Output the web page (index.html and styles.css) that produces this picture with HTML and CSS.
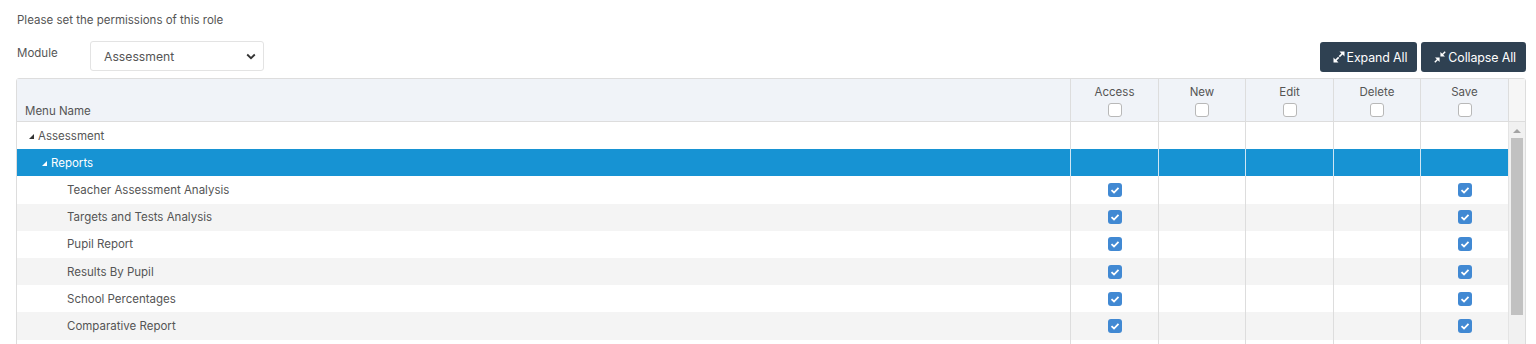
FILE: index.html
```html
<!DOCTYPE html>
<html>
<head>
<meta charset="utf-8">
<link rel="stylesheet" href="styles.css">
</head>
<body>
<div class="page">
  <p class="intro">Please set the permissions of this role</p>
  <div class="toolbar">
    <div class="module">
      <label class="module-label">Module</label>
      <div class="select">
        <span>Assessment</span>
        <svg class="chev" width="10" height="7" viewBox="0 0 10 7"><path d="M1.2 1.5 L5 5.2 L8.8 1.5" fill="none" stroke="#333" stroke-width="1.8"/></svg>
      </div>
    </div>
    <div class="actions">
      <button class="btn"><svg width="12" height="12" viewBox="0 0 12 12"><path d="M6.5 0.5 H11.5 V5.5 L9.6 3.6 L6.9 6.3 L5.7 5.1 L8.4 2.4 Z M5.5 11.5 H0.5 V6.5 L2.4 8.4 L5.1 5.7 L6.3 6.9 L3.6 9.6 Z" fill="#fff"/></svg>Expand All</button>
      <button class="btn"><svg width="12" height="12" viewBox="0 0 12 12"><path d="M10.7 0.3 L11.7 1.3 L9.2 3.8 L11 5.6 H6.4 V1 L8.2 2.8 Z M1.3 11.7 L0.3 10.7 L2.8 8.2 L1 6.4 H5.6 V11 L3.8 9.2 Z" fill="#fff"/></svg>Collapse All</button>
    </div>
  </div>

  <div class="grid">
    <div class="head">
      <div class="hcell name">Menu Name</div>
      <div class="hcell"><span>Access</span><i class="cb"></i></div>
      <div class="hcell"><span>New</span><i class="cb"></i></div>
      <div class="hcell"><span>Edit</span><i class="cb"></i></div>
      <div class="hcell"><span>Delete</span><i class="cb"></i></div>
      <div class="hcell"><span>Save</span><i class="cb"></i></div>
      <div class="hcell sb"></div>
    </div>
    <div class="body">
      <div class="rows">
        <div class="row">
          <div class="cell name lvl0"><span class="tri dark"></span>Assessment</div>
          <div class="cell"></div><div class="cell"></div><div class="cell"></div><div class="cell"></div><div class="cell"></div>
        </div>
        <div class="row sel">
          <div class="cell name lvl1"><span class="tri light"></span>Reports</div>
          <div class="cell"></div><div class="cell"></div><div class="cell"></div><div class="cell"></div><div class="cell"></div>
        </div>
        <div class="row">
          <div class="cell name lvl2">Teacher Assessment Analysis</div>
          <div class="cell"><i class="cb on"></i></div><div class="cell"></div><div class="cell"></div><div class="cell"></div><div class="cell"><i class="cb on"></i></div>
        </div>
        <div class="row alt">
          <div class="cell name lvl2">Targets and Tests Analysis</div>
          <div class="cell"><i class="cb on"></i></div><div class="cell"></div><div class="cell"></div><div class="cell"></div><div class="cell"><i class="cb on"></i></div>
        </div>
        <div class="row">
          <div class="cell name lvl2">Pupil Report</div>
          <div class="cell"><i class="cb on"></i></div><div class="cell"></div><div class="cell"></div><div class="cell"></div><div class="cell"><i class="cb on"></i></div>
        </div>
        <div class="row alt">
          <div class="cell name lvl2">Results By Pupil</div>
          <div class="cell"><i class="cb on"></i></div><div class="cell"></div><div class="cell"></div><div class="cell"></div><div class="cell"><i class="cb on"></i></div>
        </div>
        <div class="row">
          <div class="cell name lvl2">School Percentages</div>
          <div class="cell"><i class="cb on"></i></div><div class="cell"></div><div class="cell"></div><div class="cell"></div><div class="cell"><i class="cb on"></i></div>
        </div>
        <div class="row alt">
          <div class="cell name lvl2">Comparative Report</div>
          <div class="cell"><i class="cb on"></i></div><div class="cell"></div><div class="cell"></div><div class="cell"></div><div class="cell"><i class="cb on"></i></div>
        </div>
        <div class="row">
          <div class="cell name lvl2"></div>
          <div class="cell"></div><div class="cell"></div><div class="cell"></div><div class="cell"></div><div class="cell"></div>
        </div>
      </div>
      <div class="scrollbar">
        <div class="arrow"></div>
        <div class="thumb"></div>
      </div>
    </div>
  </div>
</div>
</body>
</html>
```

FILE: styles.css
```css
* { box-sizing: border-box; }
html, body { margin: 0; padding: 0; background: #fff; overflow: hidden; }
body { font-family: Inter, "Noto Sans", sans-serif; font-size: 11.5px; color: #555; }
.page { padding: 0 10px 0 16px; height: 344px; overflow: hidden; }
.intro { margin: 0; padding-top: 13px; line-height: 14px; font-size: 11.5px; color: #555; padding-left: 1px; }
.toolbar { display: flex; justify-content: space-between; align-items: flex-end; margin-top: 14px; }
.module { display: flex; align-items: flex-start; }
.module-label { width: 74px; padding-left: 1px; padding-top: 5px; font-size: 11.5px; color: #555; }
.select { width: 174px; height: 30px; border: 1px solid #e3e3e3; border-radius: 3px; display: flex; align-items: center; justify-content: space-between; padding: 0 7px 0 13px; font-size: 12.2px; color: #555; }
.chev { margin-top: 1px; }
.actions { display: flex; gap: 4px; margin-bottom: -1px; }
.btn { height: 30px; background: #2f4152; color: #fff; border: 0; border-radius: 3px; font-family: Inter, sans-serif; font-size: 12.4px; padding: 0 10px 0 13px; display: flex; align-items: center; gap: 2px; letter-spacing: -0.1px; }
.btn svg { margin-top: -1px; }
.grid { margin-top: 7px; border: 1px solid #ddd; border-radius: 3px 3px 0 0; }
.head { display: grid; grid-template-columns: 1fr 88px 87px 88px 87px 88px 17px; background: #f0f3f8; border-bottom: 1px solid #ddd; height: 43px; }
.hcell { border-left: 1px solid #ddd; display: flex; flex-direction: column; align-items: center; padding-top: 6px; gap: 4px; color: #555; font-size: 11.5px; line-height: 14px; }
.hcell.name { border-left: 0; align-items: flex-start; justify-content: flex-end; padding: 0 0 3px 8px; }
.hcell.sb { background: #f6f6f6; }
.body { display: flex; }
.rows { flex: 1; }
.row { display: grid; grid-template-columns: 1fr 88px 87px 88px 87px 88px; height: 27.2px; background: #fff; }
.row.alt { background: #f4f4f4; }
.row.sel { background: #1793d3; color: #fff; }
.cell { border-left: 1px solid #ddd; display: flex; align-items: center; justify-content: center; }
.row.sel .cell { border-left-color: #cfe6f4; }
.cell.name { border-left: 0; justify-content: flex-start; font-size: 11.5px; }
.lvl0 { padding-left: 12px; color: #555; }
.lvl1 { padding-left: 25px; color: #fff; }
.lvl2 { padding-left: 50px; color: #555; }
.tri { width: 0; height: 0; border-left: 5px solid transparent; border-bottom: 5px solid #333; margin-right: 4px; margin-top: 1px; }
.tri.light { border-bottom-color: #fff; }
.cb { display: block; width: 14px; height: 14px; border: 1px solid #b8b8b8; border-radius: 3px; background: #fff; }
.cb.on { border: 0; background: #4189d3 url("data:image/svg+xml,%3Csvg xmlns='http://www.w3.org/2000/svg' width='14' height='14' viewBox='0 0 14 14'%3E%3Cpath d='M3.5 7.2 L6 9.5 L10.5 4.8' fill='none' stroke='white' stroke-width='1.8'/%3E%3C/svg%3E") no-repeat center; }
.scrollbar { width: 17px; background: #f1f1f1; border-left: 1px solid #e4e4e4; display: flex; flex-direction: column; align-items: center; }
.arrow { width: 0; height: 0; border-left: 4px solid transparent; border-right: 4px solid transparent; border-bottom: 4px solid #a3a3a3; margin-top: 7px; }
.thumb { width: 12px; height: 177px; background: #c1c1c1; margin-top: 5px; }
```
